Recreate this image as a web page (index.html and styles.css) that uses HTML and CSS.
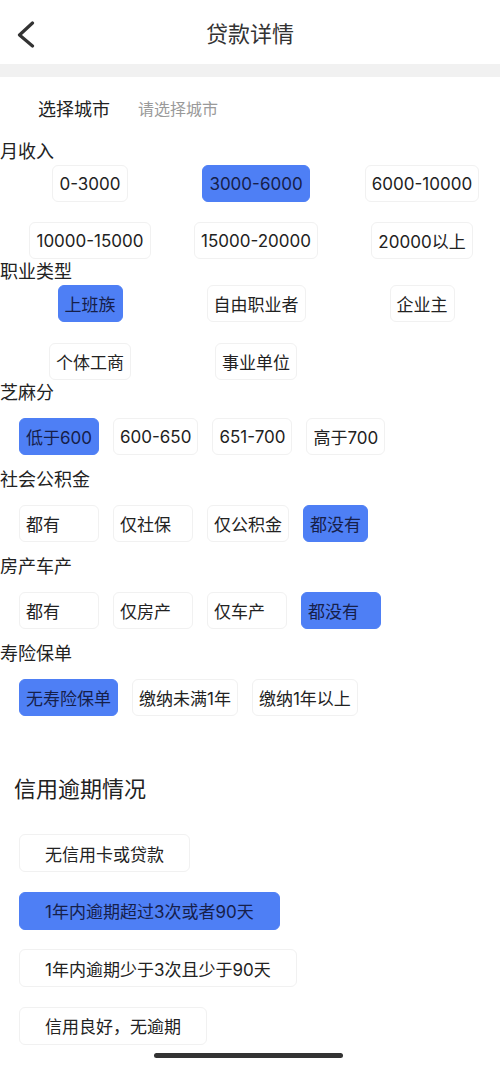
FILE: index.html
```html
<!DOCTYPE html>
<html lang="zh-CN">
<head>
    <meta charset="UTF-8">
    <meta name="viewport" content="width=device-width, initial-scale=1.0">
    <title>贷款详情</title>
    <link rel="stylesheet" href="styles.css">
</head>
<body>
    <div class="header">
        <div class="back">
            <svg width="20" height="28" viewBox="0 0 20 28">
                <path d="M16.5 3 L3.5 15 L16.5 26" fill="none" stroke="#333" stroke-width="3.2" stroke-linecap="round" stroke-linejoin="round"/>
            </svg>
        </div>
        <h1>贷款详情</h1>
        <div></div>
    </div>
    <div class="band"></div>

    <div class="city">
        <span class="city-label">选择城市</span>
        <span class="city-hint">请选择城市</span>
    </div>

    <!-- 月收入 -->
    <div class="label">月收入</div>
    <div class="grid3">
        <button class="opt">0-3000</button>
        <button class="opt on">3000-6000</button>
        <button class="opt">6000-10000</button>
        <button class="opt">10000-15000</button>
        <button class="opt">15000-20000</button>
        <button class="opt">20000以上</button>
    </div>

    <!-- 职业类型 -->
    <div class="label">职业类型</div>
    <div class="grid3 grid-job">
        <button class="opt on">上班族</button>
        <button class="opt">自由职业者</button>
        <button class="opt">企业主</button>
        <button class="opt">个体工商</button>
        <button class="opt">事业单位</button>
    </div>

    <!-- 芝麻分 -->
    <div class="label label-after">芝麻分</div>
    <div class="row">
        <button class="opt on">低于600</button>
        <button class="opt">600-650</button>
        <button class="opt">651-700</button>
        <button class="opt">高于700</button>
    </div>

    <div class="label label-gap">社会公积金</div>
    <div class="row">
        <button class="opt wide">都有</button>
        <button class="opt wide">仅社保</button>
        <button class="opt wide">仅公积金</button>
        <button class="opt on">都没有</button>
    </div>

    <div class="label label-gap">房产车产</div>
    <div class="row">
        <button class="opt wide">都有</button>
        <button class="opt wide">仅房产</button>
        <button class="opt wide">仅车产</button>
        <button class="opt wide on">都没有</button>
    </div>

    <div class="label label-gap">寿险保单</div>
    <div class="row">
        <button class="opt on">无寿险保单</button>
        <button class="opt">缴纳未满1年</button>
        <button class="opt">缴纳1年以上</button>
    </div>

    <h3 class="credit-title">信用逾期情况</h3>
    <div class="credit">
        <button class="opt">无信用卡或贷款</button>
        <button class="opt on">1年内逾期超过3次或者90天</button>
        <button class="opt">1年内逾期少于3次且少于90天</button>
        <button class="opt">信用良好，无逾期</button>
    </div>

    <div class="home-bar"></div>
</body>
</html>
```

FILE: styles.css
```css
* {
    margin: 0;
    padding: 0;
    box-sizing: border-box;
}

body {
    font-family: Inter, "Noto Sans CJK SC", sans-serif;
    background: #ffffff;
    color: #222;
    width: 500px;
}

/* Header */
.header {
    height: 64px;
    display: grid;
    grid-template-columns: 60px 1fr 60px;
    align-items: center;
}

.back {
    padding-left: 16px;
    padding-top: 3px;
    display: flex;
}

.header h1 {
    font-size: 22px;
    font-weight: 400;
    color: #333;
    text-align: center;
}

.band {
    height: 13px;
    background: #f1f1f1;
}

/* City */
.city {
    height: 62px;
    display: flex;
    align-items: center;
    padding-left: 38px;
    gap: 28px;
}

.city-label {
    font-size: 18px;
}

.city-hint {
    font-size: 16px;
    color: #9a9a9a;
}

/* Section labels */
.label {
    font-size: 18px;
    line-height: 26px;
}

.label-after {
    margin-bottom: 12px;
}

.label-gap {
    margin: 12px 0;
}

/* Options */
.opt {
    font-family: inherit;
    font-size: 17px;
    color: #222;
    background: #fff;
    border: 1px solid #f1f1f1;
    border-radius: 6px;
    height: 37px;
    padding: 0 6px;
    text-align: left;
    cursor: pointer;
}

.opt.on {
    background: #4e7ff5;
    border-color: #4e7ff5;
    color: #16204a;
}

.opt.wide {
    min-width: 80px;
}

.grid3 {
    display: grid;
    grid-template-columns: repeat(3, 166px);
    justify-items: center;
    row-gap: 20px;
    padding-left: 7px;
}

.grid-job {
    row-gap: 21px;
}

.row {
    display: flex;
    gap: 14px;
    padding-left: 19px;
}

/* Credit */
.credit-title {
    font-size: 22px;
    font-weight: 400;
    line-height: 30px;
    padding-left: 14px;
    margin-top: 58px;
}

.credit {
    display: flex;
    flex-direction: column;
    align-items: flex-start;
    gap: 19.5px;
    padding-left: 19px;
    margin-top: 30px;
}

.credit .opt {
    padding: 0 25px;
    height: 38px;
}

.home-bar {
    width: 189px;
    height: 5px;
    border-radius: 3px;
    background: #333;
    margin: 8px 0 0 154px;
}
```
